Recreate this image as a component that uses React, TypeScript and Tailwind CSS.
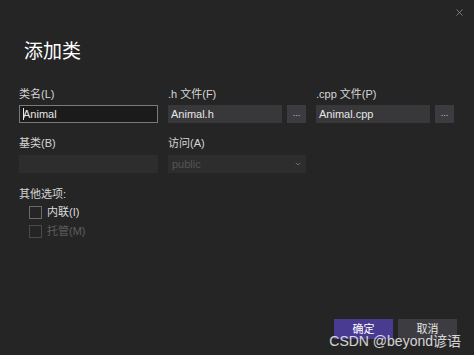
import { X, ChevronDown } from 'lucide-react';

const FONT = "font-['Liberation_Sans','Noto_Sans_CJK_SC',sans-serif]";

function Label({ children }: { children: React.ReactNode }) {
  return <div className="text-[11px] leading-[14px] text-[#d6d6d6]">{children}</div>;
}

function Field({ value, focused = false, className = '' }: { value: string; focused?: boolean; className?: string }) {
  return (
    <div
      className={`h-[18px] flex items-center px-[3px] text-[11px] text-[#e6e6e6] ${
        focused ? 'bg-[#1b1b1c] border border-[#7a7a7a]' : 'bg-[#38383b]'
      } ${className}`}
    >
      {focused && <span className="w-px h-[12px] bg-[#e6e6e6] -mr-px" />}
      {value}
    </div>
  );
}

function Browse() {
  return (
    <div className="w-[19px] h-[18px] bg-[#3c3c40] flex items-center justify-center text-[9px] leading-none text-[#cfcfcf] pb-[2px]">
      ...
    </div>
  );
}

function Check({ label, disabled = false }: { label: string; disabled?: boolean }) {
  return (
    <div className="flex items-center gap-[5px] h-[13px]">
      <div className={`w-[13px] h-[13px] border ${disabled ? 'border-[#4a4a4a]' : 'border-[#6a6a6a]'}`} />
      <span className={`text-[11px] leading-none ${disabled ? 'text-[#5e5e5e]' : 'text-[#dcdcdc]'}`}>{label}</span>
    </div>
  );
}

export default function App() {
  return (
    <div className={`relative w-[474px] h-[355px] bg-[#252526] flex flex-col ${FONT}`}>
      <div className="flex justify-end pt-[7px] pr-[9px]">
        <X className="w-[11px] h-[11px] text-[#a0a0a0]" strokeWidth={1.5} />
      </div>
      <div className="pl-[24px] pt-[21px] text-[19px] leading-[26px] text-white">添加类</div>

      <div className="pl-[19px] pt-[22px] grid grid-cols-[139px_138px_138px] gap-x-[10px]">
        <div className="flex flex-col gap-[4px]">
          <Label>类名(L)</Label>
          <Field value="Animal" focused />
        </div>
        <div className="flex flex-col gap-[4px]">
          <Label>.h 文件(F)</Label>
          <div className="flex gap-[5px]">
            <Field value="Animal.h" className="w-[114px]" />
            <Browse />
          </div>
        </div>
        <div className="flex flex-col gap-[4px]">
          <Label>.cpp 文件(P)</Label>
          <div className="flex gap-[5px]">
            <Field value="Animal.cpp" className="w-[114px]" />
            <Browse />
          </div>
        </div>

        <div className="flex flex-col gap-[5px] mt-[13px]">
          <Label>基类(B)</Label>
          <div className="h-[18px] bg-[#2d2d2e]" />
        </div>
        <div className="flex flex-col gap-[5px] mt-[13px]">
          <Label>访问(A)</Label>
          <div className="h-[18px] bg-[#2d2d2e] flex items-center justify-between px-[4px]">
            <span className="text-[11px] text-[#555555]">public</span>
            <ChevronDown className="w-[8px] h-[8px] text-[#6a6a6a]" strokeWidth={3} />
          </div>
        </div>
      </div>

      <div className="pl-[19px] pt-[14px] flex flex-col">
        <Label>其他选项:</Label>
        <div className="pl-[10px] pt-[5px] flex flex-col gap-[6px]">
          <Check label="内联(I)" />
          <Check label="托管(M)" disabled />
        </div>
      </div>

      <div className="mt-auto mb-[16px] mr-[17px] flex justify-end gap-[5px]">
        <div className="w-[59px] h-[20px] bg-[#4a3b92] flex items-center justify-center text-[11px] text-white">确定</div>
        <div className="w-[59px] h-[20px] bg-[#3d3d41] flex items-center justify-center text-[11px] text-[#e6e6e6]">取消</div>
      </div>

      <div className="absolute right-[13px] bottom-[7px] text-[14px] leading-none text-white/80">
        CSDN @beyond谚语
      </div>
    </div>
  );
}
